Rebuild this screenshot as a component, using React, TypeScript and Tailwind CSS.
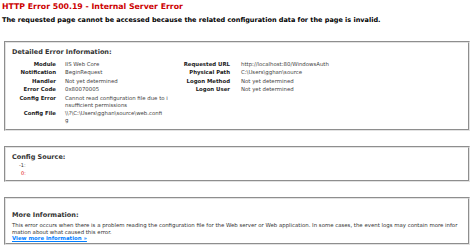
import React from 'react'

interface Row {
  label: string
  value: React.ReactNode
}

const leftRows: Row[] = [
  { label: 'Module', value: 'IIS Web Core' },
  { label: 'Notification', value: 'BeginRequest' },
  { label: 'Handler', value: 'Not yet determined' },
  { label: 'Error Code', value: '0x80070005' },
  {
    label: 'Config Error',
    value: (
      <>
        Cannot read configuration file due to i
        <br />
        nsufficient permissions
      </>
    ),
  },
  {
    label: 'Config File',
    value: (
      <>
        {'\\\\?\\C:\\Users\\gghan\\source\\web.confi'}
        <br />g
      </>
    ),
  },
]

const rightRows: Row[] = [
  { label: 'Requested URL', value: 'http://localhost:80/WindowsAuth' },
  { label: 'Physical Path', value: 'C:\\Users\\gghan\\source' },
  { label: 'Logon Method', value: 'Not yet determined' },
  { label: 'Logon User', value: 'Not yet determined' },
]

function DetailRows({ rows, labelWidth, gap }: { rows: Row[]; labelWidth: string; gap: string }) {
  return (
    <div className="flex flex-col">
      {rows.map((row) => (
        <div key={row.label} className={`flex py-[0.75px] ${gap}`}>
          <div className={`${labelWidth} shrink-0 text-right font-bold text-[#222]`}>{row.label}</div>
          <div className="whitespace-nowrap text-[#444]">{row.value}</div>
        </div>
      ))}
    </div>
  )
}

const boxClass = 'border-2 [border-style:groove] border-[#e2e2e2] px-[6px]'

export default function App() {
  return (
    <div className="w-[474px] h-[246px] overflow-hidden bg-white font-['DejaVu_Sans',Verdana,sans-serif] text-black">
      {/* Header */}
      <div className="pl-[2px] pt-[2px]">
        <h2 className="text-[7.8px] leading-[10px] font-bold text-[#cc0000]">HTTP Error 500.19 - Internal Server Error</h2>
        <h3 className="mt-[4px] text-[6.5px] leading-[8px] font-bold">
          The requested page cannot be accessed because the related configuration data for the page is invalid.
        </h3>
      </div>

      <div className="ml-[4px] mt-[17px] w-[466px] flex flex-col gap-[15px]">
        {/* Detailed Error Information */}
        <div className={`${boxClass} pt-[5px] pb-[4px]`}>
          <h4 className="text-[6.5px] leading-[8px] font-bold text-[#333]">Detailed Error Information:</h4>
          <div className="mt-[4px] flex text-[5.4px] leading-[7px]">
            <div className="w-[166px] shrink-0">
              <DetailRows rows={leftRows} labelWidth="w-[44px]" gap="gap-[9px]" />
            </div>
            <DetailRows rows={rightRows} labelWidth="w-[52px]" gap="gap-[11px]" />
          </div>
        </div>

        {/* Config Source */}
        <div className={`${boxClass} pt-[5px] pb-[3px]`}>
          <h4 className="text-[6.5px] leading-[8px] font-bold text-[#333]">Config Source:</h4>
          <div className="text-[5px] leading-[8px]">
            <div className="pl-[7px] text-[#333]">-1:</div>
            <div className="pl-[9px] text-[#e00000]">0:</div>
          </div>
        </div>

        {/* More Information */}
        <div className={`${boxClass} pt-[12px] pb-[1px]`}>
          <h4 className="text-[6.5px] leading-[8px] font-bold text-[#333]">More Information:</h4>
          <div className="mt-[3px] text-[5.4px] leading-[6.5px] text-[#333]">
            <p className="whitespace-nowrap">
              This error occurs when there is a problem reading the configuration file for the Web server or Web application. In some cases, the event logs may contain more infor
              <br />
              mation about what caused this error.
            </p>
            <a href="#" className="font-bold text-[#007eff] underline">
              View more information »
            </a>
          </div>
        </div>
      </div>
    </div>
  )
}
